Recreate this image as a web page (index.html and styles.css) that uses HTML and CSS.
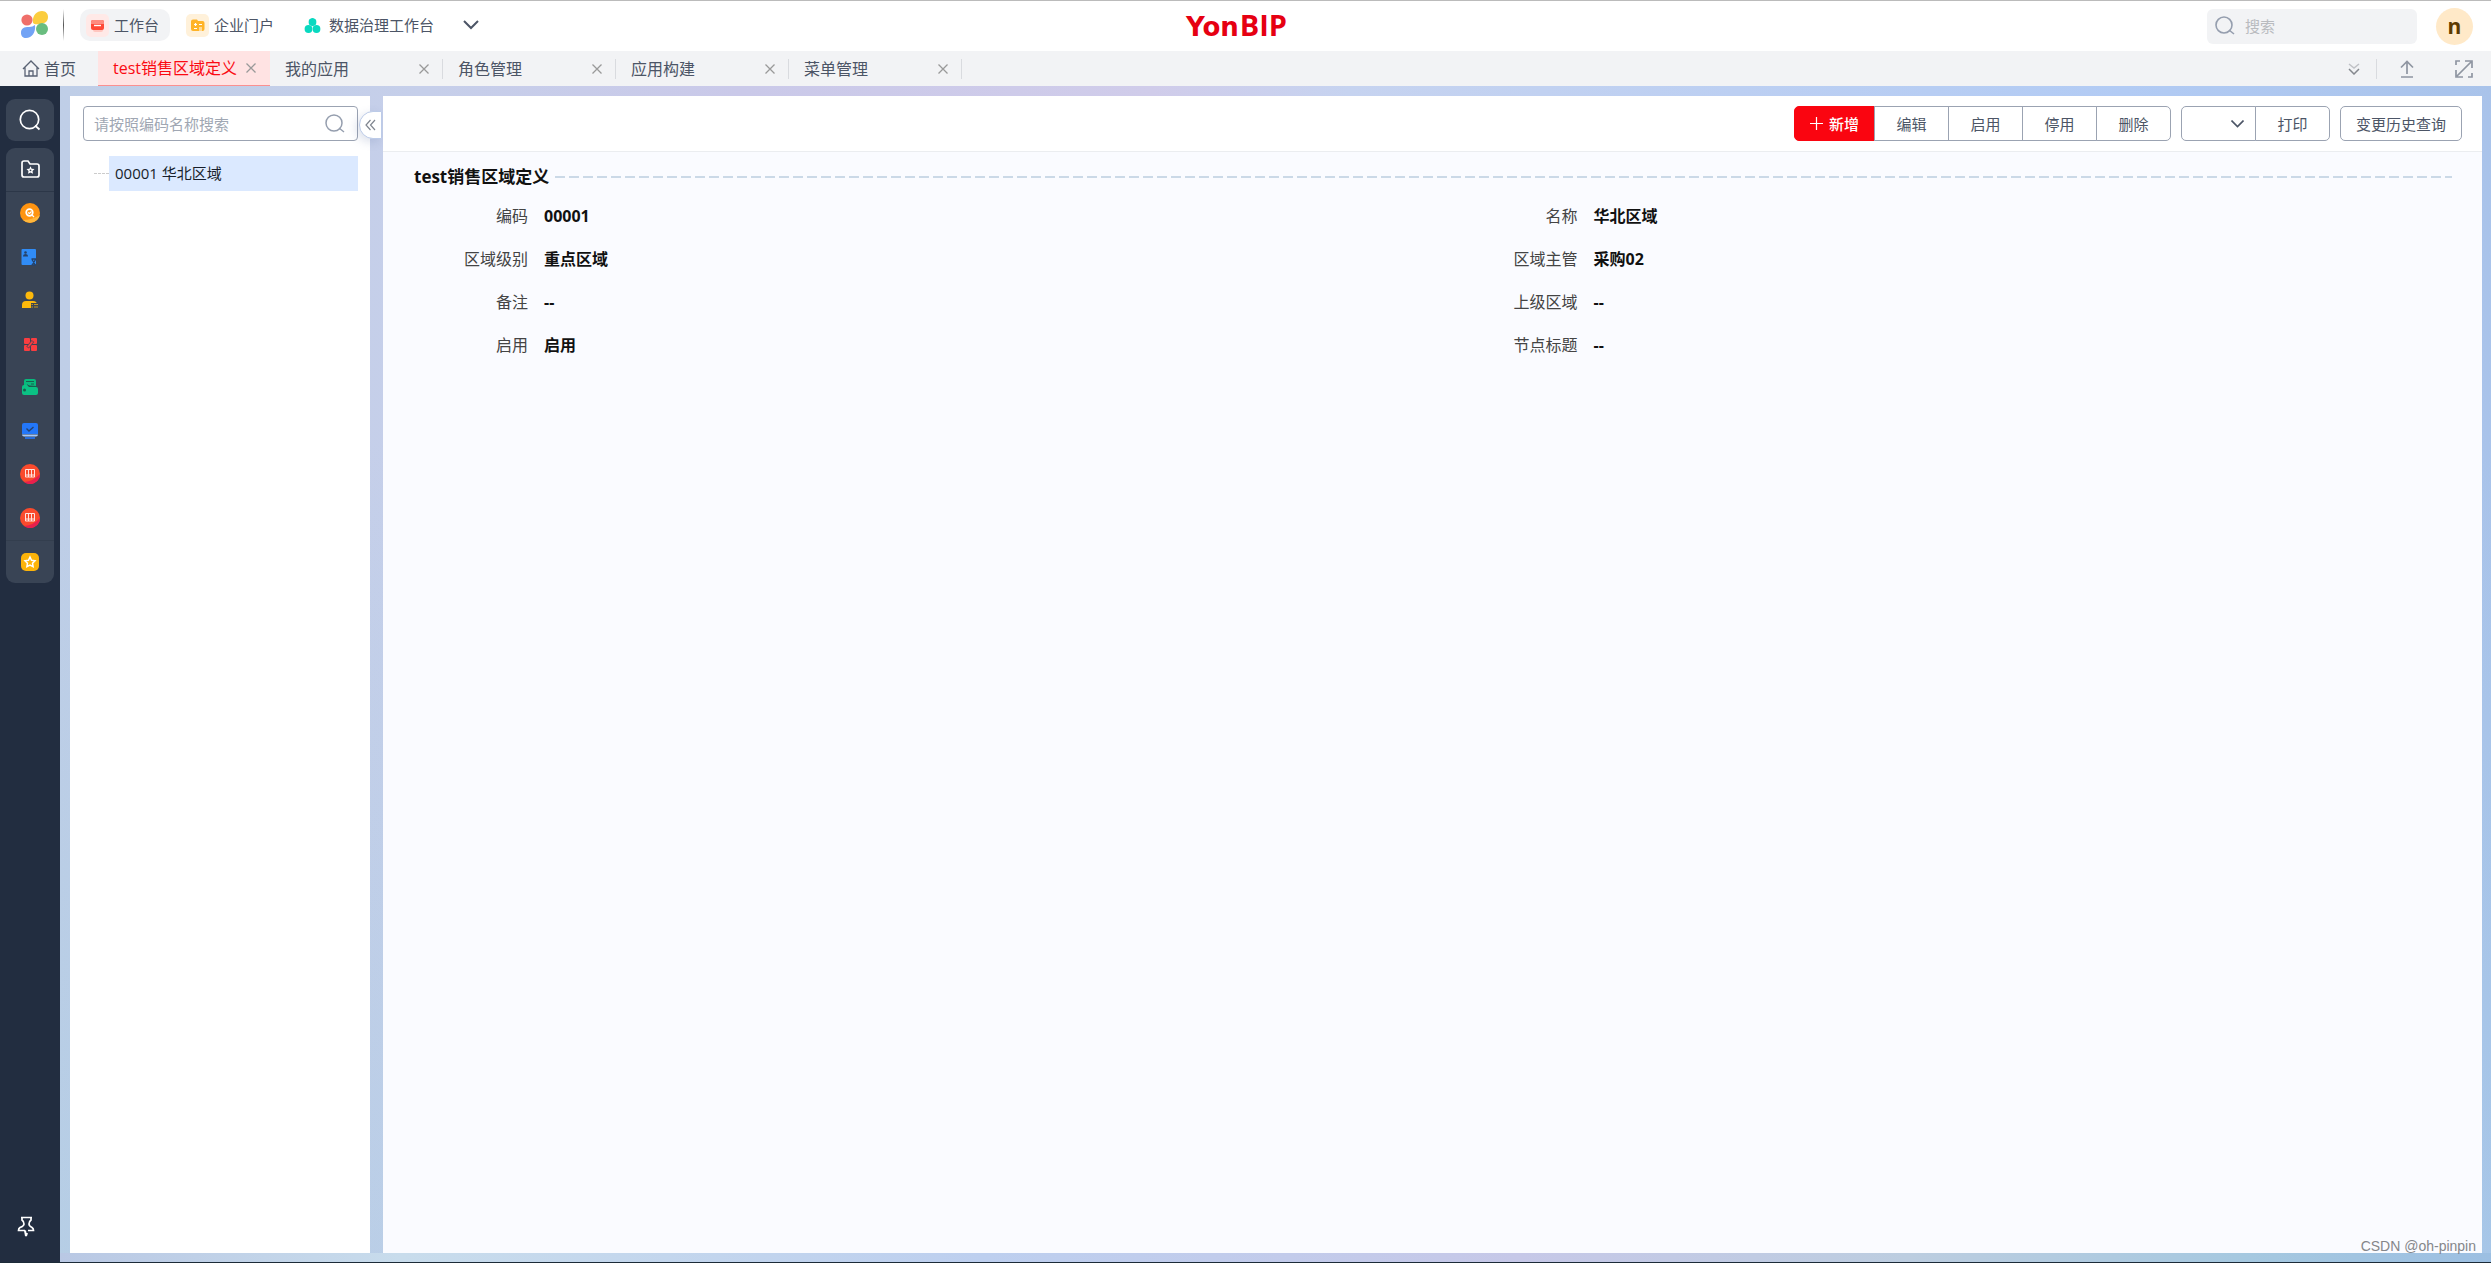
FILE: index.html
```html
<!DOCTYPE html>
<html lang="zh-CN">
<head>
<meta charset="utf-8">
<title>test销售区域定义 - YonBIP</title>
<link rel="stylesheet" href="styles.css">
</head>
<body>
<header class="topbar">
  <div class="topbar-left">
    <svg class="brand-mark" viewBox="0 0 28 28" aria-hidden="true">
      <circle cx="6" cy="9" r="5.6" fill="#ef6f6a"/>
      <path d="M12 12C11 4 16 0 21 0c4 0 6 3 6 6 0 5-4 7-9 7-2 0-4 1-6-1z" fill="#fbcd3f"/>
      <path d="M14 14c1 7-3 13-9 13-3 0-5-2-5-5 0-5 3-6 8-6 3 0 4-1 6-2z" fill="#72a3f5"/>
      <circle cx="21" cy="18" r="6" fill="#69bd7f"/>
    </svg>
    <span class="brand-divider"></span>
    <nav class="spaces" aria-label="工作空间">
      <a class="space space-active" href="#">
        <svg class="space-icon" viewBox="0 0 23 23" aria-hidden="true"><rect width="23" height="23" rx="5" fill="#ffe9e7"/><rect x="7" y="8" width="10" height="10" rx="2" fill="#ffc6bf"/><rect x="5" y="6" width="13" height="10" rx="2" fill="#ff4936"/><path d="M5 8q0-2 2-2h9q2 0 2 2v2H5z" fill="#ff8b7f"/><path d="M8 11.5h7" stroke="#fff" stroke-width="1.4"/></svg>
        <span>工作台</span>
      </a>
      <a class="space" href="#">
        <svg class="space-icon" viewBox="0 0 23 23" aria-hidden="true"><rect width="23" height="23" rx="5" fill="#fff1da"/><path d="M5 7.500q0-2 2-2h4l1 1.500h4.500q2 0 2 2V15q0 2-2 2H7q-2 0-2-2z" fill="#ffb428"/><path d="M8 10.500h3M9.500 9v3M8 14.500h3M13 10.500h3M13 14h3M13 16h3" stroke="#fff" stroke-width="1.200"/></svg>
        <span>企业门户</span>
      </a>
      <a class="space" href="#">
        <svg class="space-icon" viewBox="0 0 23 23" aria-hidden="true"><g fill="#08d9c0"><path d="M11.500 4l3.600 2v4.200l-3.600 2-3.600-2V6z"/><circle cx="11.500" cy="8" r="3.800"/><circle cx="7.500" cy="15" r="3.900"/><circle cx="15.500" cy="15" r="3.900"/></g></svg>
        <span>数据治理工作台</span>
      </a>
      <button class="icon-button" type="button" aria-label="更多">
        <svg width="16" height="10" viewBox="0 0 16 10" fill="none" stroke="#4c5566" stroke-width="2"><path d="M1 1l7 7 7-7"/></svg>
      </button>
    </nav>
  </div>
  <strong class="product"><span class="product-yon">Yon</span><span class="product-bip">BIP</span></strong>
  <div class="account">
    <label class="global-search">
      <svg width="20" height="20" viewBox="0 0 20 20" fill="none" stroke="#959eae" stroke-width="1.600"><circle cx="9" cy="9" r="8"/><path d="M14 14l5 4"/></svg>
      <input type="search" placeholder="搜索" aria-label="搜索">
    </label>
    <button class="avatar" type="button">n</button>
  </div>
</header>

<div class="tabbar">
  <a class="home" href="#">
    <svg width="18" height="17" viewBox="0 0 18 17" fill="none" stroke="#596273" stroke-width="1.300"><path d="M1 9l8-8 8 8M3 7.500V16h12V7.500M7 16v-5h4v5"/></svg>
    <span>首页</span>
  </a>
  <div class="tab tab-active"><a href="#">test销售区域定义</a><button class="close" type="button" aria-label="关闭"><svg width="10" height="10" viewBox="0 0 10 10"><path d="M.5.5l9 9M9.500.5l-9 9"/></svg></button></div>
  <div class="tab"><a href="#">我的应用</a><button class="close" type="button" aria-label="关闭"><svg width="10" height="10" viewBox="0 0 10 10"><path d="M.5.5l9 9M9.500.5l-9 9"/></svg></button></div>
  <div class="tab"><a href="#">角色管理</a><button class="close" type="button" aria-label="关闭"><svg width="10" height="10" viewBox="0 0 10 10"><path d="M.5.5l9 9M9.500.5l-9 9"/></svg></button></div>
  <div class="tab"><a href="#">应用构建</a><button class="close" type="button" aria-label="关闭"><svg width="10" height="10" viewBox="0 0 10 10"><path d="M.5.5l9 9M9.500.5l-9 9"/></svg></button></div>
  <div class="tab"><a href="#">菜单管理</a><button class="close" type="button" aria-label="关闭"><svg width="10" height="10" viewBox="0 0 10 10"><path d="M.5.5l9 9M9.500.5l-9 9"/></svg></button></div>
  <div class="tab-tools">
    <button class="icon-button" type="button" aria-label="全部页签"><svg width="12" height="12" viewBox="0 0 12 12" fill="none" stroke-width="1.500"><path d="M1 1l5 4 5-4" stroke="#c0c2c6"/><path d="M1 6l5 5 5-5" stroke="#85888e"/></svg></button>
    <span class="tool-divider"></span>
    <button class="icon-button" type="button" aria-label="收起"><svg width="14" height="18" viewBox="0 0 14 18" fill="none" stroke="#8f95a1" stroke-width="1.700"><path d="M1 17h12M7 14V2M1 7.500l6-6 6 6"/></svg></button>
    <button class="icon-button tool-last" type="button" aria-label="全屏"><svg width="18" height="18" viewBox="0 0 18 18" fill="none" stroke="#8f95a1" stroke-width="1.700"><path d="M1 5V1h4M13 17h4v-4M2 16L16 2M10 1h7v7M8 17H1v-7"/></svg></button>
  </div>
</div>

<div class="workspace">
  <nav class="rail" aria-label="应用">
    <button class="rail-search" type="button" aria-label="搜索"><svg width="22" height="22" viewBox="0 0 22 22" fill="none" stroke="#fff" stroke-width="1.700"><circle cx="10.500" cy="10.500" r="9.200"/><path d="M16 16.500l4.500 4"/></svg></button>
    <div class="rail-group">
      <a class="rail-item rail-first" href="#" aria-label="收藏"><svg width="20" height="20" viewBox="0 0 20 20" fill="none" stroke="#fff" stroke-width="1.700"><path d="M2 4q0-2 2-2h4l2 3h7q2 0 2 2v9q0 2-2 2H4q-2 0-2-2z"/><path d="M10.500 7.200l1.200 2.500 2.800.4-2 2 .5 2.700-2.500-1.300L8 14.800l.5-2.700-2-2 2.800-.4z" fill="#fff" stroke="none"/><circle cx="10.500" cy="11.300" r=".9" fill="#394455" stroke="none"/></svg></a>
      <a class="rail-item" href="#" aria-label="查询"><svg width="20" height="20" viewBox="0 0 20 20"><circle cx="10" cy="10" r="10" fill="#ff9411"/><path d="M3 17a10 10 0 0 0 14 0q2-2 3-5Q12 17 3 17z" fill="#ffb73c"/><circle cx="9.500" cy="9.500" r="3.300" fill="none" stroke="#fff" stroke-width="1.700"/><path d="M12 12l2 2M8 9.500l1.500 1 2-2" fill="none" stroke="#fff" stroke-width="1.200"/></svg></a>
      <a class="rail-item" href="#" aria-label="档案"><svg width="20" height="20" viewBox="0 0 20 20"><rect x="1.500" y="2" width="14.500" height="16" rx="1" fill="#308cf6"/><circle cx="5.500" cy="5.500" r="1.300" fill="#26436b"/><path d="M3 9.500q0-2.500 2.500-2.500T8 9.500z" fill="#26436b"/><path d="M11.500 12h4.500M11.500 18h4.500M12 12.500l3 5M15.500 12.500l-3 5" stroke="#26436b" stroke-width="1.300"/></svg></a>
      <a class="rail-item" href="#" aria-label="人员"><svg width="20" height="20" viewBox="0 0 20 20"><circle cx="9.500" cy="5.500" r="4" fill="#fdb90b"/><path d="M2 18v-3q0-4 4-4h7q4 0 4 4v3z" fill="#fdb90b"/><path d="M11 18v-5h8v5z" fill="#394455"/><path d="M11.500 14.500h1.500M14 14.500h4M11.500 17h1.500M14 17h4" stroke="#c39522" stroke-width="1.200"/></svg></a>
      <a class="rail-item" href="#" aria-label="组件"><svg width="20" height="20" viewBox="0 0 20 20"><g fill="#f93d40"><rect x="4" y="4" width="6" height="6" rx="1"/><rect x="11" y="4" width="6" height="6" rx="1"/><rect x="4" y="11" width="6" height="6" rx="1"/><rect x="11" y="11" width="6" height="6" rx="1"/></g><path d="M7.500 13.500l5.500-6.500" stroke="#6b3f4d" stroke-width="3.400"/><path d="M8 13l4.500-5.500" stroke="#f93d40" stroke-width="1.600"/></svg></a>
      <a class="rail-item" href="#" aria-label="钱包"><svg width="20" height="20" viewBox="0 0 20 20"><path d="M4 8V4q0-2 2-2h8q2 0 2 2v5z" fill="#08b97c"/><path d="M2 10q0-2 2-2h3l2 2h7q2 0 2 2v4q0 2-2 2H4q-2 0-2-2z" fill="#0bc184"/><path d="M6 4.500h8M7.500 7.500l2 2H17M11 7h3" fill="none" stroke="#17604f"/><circle cx="4.500" cy="13" r="1.500" fill="#17604f"/></svg></a>
      <a class="rail-item" href="#" aria-label="桌面"><svg width="20" height="20" viewBox="0 0 20 20"><path d="M2 13V4q0-2 2-2h12q2 0 2 2v9z" fill="#2377f9"/><path d="M2 13.500h16q0 2-2 2H4q-2 0-2-2z" fill="#a5c7f8"/><path d="M5 17h10" stroke="#2377f9" stroke-width="1.600"/><path d="M6.500 7.500l2.500 2.500 4.500-4" fill="none" stroke="#25426e" stroke-width="1.400"/></svg></a>
      <a class="rail-item" href="#" aria-label="应用一"><svg width="20" height="20" viewBox="0 0 20 20"><circle cx="10" cy="10" r="10" fill="#fa4a2c"/><path d="M4 18a10 10 0 0 0 16-8Q14 17 4 18z" fill="#e81f4d"/><path d="M5.500 5.500h9v7.500h-9zM8.500 5.500v7.500M11.500 5.500v7.500M5.500 11h9" fill="none" stroke="#ffe3de" stroke-width="1"/></svg></a>
      <a class="rail-item" href="#" aria-label="应用二"><svg width="20" height="20" viewBox="0 0 20 20"><circle cx="10" cy="10" r="10" fill="#fa4a2c"/><path d="M4 18a10 10 0 0 0 16-8Q14 17 4 18z" fill="#e81f4d"/><path d="M5.500 5.500h9v7.500h-9zM8.500 5.500v7.500M11.500 5.500v7.500M5.500 11h9" fill="none" stroke="#ffe3de" stroke-width="1"/></svg></a>
      <a class="rail-item rail-last" href="#" aria-label="星标"><svg width="20" height="20" viewBox="0 0 20 20"><rect x="1" y="1" width="18" height="18" rx="5" fill="#fdb40a"/><path d="M10 5l1.500 3.200 3.500.5-2.500 2.500.6 3.500L10 13l-3.100 1.700.6-3.500L5 8.700l3.500-.5z" fill="none" stroke="#fff" stroke-width="1.500"/></svg></a>
    </div>
    <button class="rail-pin" type="button" aria-label="固定"><svg width="18" height="22" viewBox="0 0 18 22" fill="none" stroke="#fff" stroke-width="1.700"><path d="M4 1.500h11M5 2v2q2 1.500 2 4 0 2-4 3.500-1.500 1-1.500 3h6.500M14 2v2q-2 1.500-2 4 0 2 3 3.500 1.500 1 1.500 3H11"/><path d="M8 14.500l1 5.500 1-3" stroke-width="2"/></svg></button>
  </nav>

  <main class="content">
    <aside class="tree-panel">
      <label class="tree-search">
        <input type="search" placeholder="请按照编码名称搜索" aria-label="请按照编码名称搜索">
        <svg width="20" height="20" viewBox="0 0 20 20" fill="none" stroke="#959eae" stroke-width="1.500"><circle cx="9" cy="9" r="8"/><path d="M14 14l5 4"/></svg>
      </label>
      <ul class="tree">
        <li><span class="tree-line"></span><a class="tree-node" href="#">00001 华北区域</a></li>
      </ul>
      <button class="collapse" type="button" aria-label="收起"><svg width="11" height="12" viewBox="0 0 11 12" fill="none" stroke="#7f858f" stroke-width="1.200"><path d="M5.500 1l-4.500 5 4.500 5M10 1L5.500 6l4.500 5"/></svg></button>
    </aside>

    <section class="detail">
      <div class="toolbar">
        <div class="button-group">
          <button class="button button-primary" type="button"><svg width="13" height="13" viewBox="0 0 13 13" stroke="#fff" stroke-width="1.200"><path d="M6.500 0v13M0 6.500h13"/></svg>新增</button>
          <button class="button" type="button">编辑</button>
          <button class="button" type="button">启用</button>
          <button class="button" type="button">停用</button>
          <button class="button" type="button">删除</button>
        </div>
        <div class="button-group">
          <button class="button button-menu" type="button" aria-label="打印模板"><svg width="13" height="8" viewBox="0 0 13 8" fill="none" stroke="#4c5566" stroke-width="1.600"><path d="M.5.5l6 6 6-6"/></svg></button>
          <button class="button" type="button">打印</button>
        </div>
        <div class="button-group"><button class="button button-wide" type="button">变更历史查询</button></div>
      </div>
      <div class="section-title"><h1>test销售区域定义</h1><span class="section-rule"></span></div>
      <dl class="fields">
        <div class="field"><dt>编码</dt><dd>00001</dd></div>
        <div class="field"><dt>名称</dt><dd>华北区域</dd></div>
        <div class="field"><dt>区域级别</dt><dd>重点区域</dd></div>
        <div class="field"><dt>区域主管</dt><dd>采购02</dd></div>
        <div class="field"><dt>备注</dt><dd>--</dd></div>
        <div class="field"><dt>上级区域</dt><dd>--</dd></div>
        <div class="field"><dt>启用</dt><dd>启用</dd></div>
        <div class="field"><dt>节点标题</dt><dd>--</dd></div>
      </dl>
      <span class="watermark">CSDN @oh-pinpin</span>
    </section>
  </main>
</div>
</body>
</html>
```
FILE: styles.css
```css
* {
  box-sizing: border-box;
}

body {
  margin: 0;
  min-height: 100vh;
  display: flex;
  flex-direction: column;
  border-top: 1px solid #bbb;
  border-bottom: 1px solid #1c2b38;
  background: #fff;
  color: #4c5566;
  font: 15px/20px "Open Sans", "Noto Sans CJK SC", sans-serif;
}

a {
  color: inherit;
  text-decoration: none;
}

button,
input {
  font: inherit;
  color: inherit;
  margin: 0;
  padding: 0;
  border: 0;
  background: none;
}

input {
  outline: 0;
  min-width: 0;
}

svg {
  display: block;
  flex: none;
}

.topbar {
  display: grid;
  grid-template-columns: 1fr auto 1fr;
  align-items: center;
  height: 50px;
  padding: 0 18px 0 0;
}

.topbar-left {
  display: flex;
  align-items: center;
  padding: 0 0 2px 21px;
}

.brand-mark {
  width: 28px;
  height: 28px;
}

.brand-divider {
  width: 1px;
  height: 32px;
  margin: 0 16px 0 14px;
  background: linear-gradient(#fff, #555, #fff);
}

.spaces {
  display: flex;
  align-items: center;
  gap: 10px;
}

.space {
  display: flex;
  align-items: center;
  gap: 5px;
  height: 32px;
  padding: 0 11px 0 6px;
  border-radius: 10px;
  white-space: nowrap;
}

.space-active {
  background: #f2f3f5;
}

.space-icon {
  width: 23px;
  height: 23px;
}

.icon-button {
  display: flex;
}

.spaces .icon-button {
  margin-left: 8px;
}

.product {
  display: flex;
  align-items: baseline;
  gap: 1px;
  color: #e60012;
  line-height: 32px;
}

.product-yon {
  font-family: "DejaVu Sans", sans-serif;
  font-size: 26px;
}

.product-bip {
  font-size: 29px;
}

.account {
  display: flex;
  align-items: center;
  justify-content: flex-end;
  gap: 19px;
}

.global-search {
  display: flex;
  align-items: center;
  gap: 10px;
  width: 210px;
  height: 35px;
  padding: 0 8px;
  border-radius: 6px;
  background: #f2f3f5;
}

.global-search input {
  flex: 1;
}

.global-search input::placeholder {
  color: #b9bbbf;
}

.avatar {
  width: 37px;
  height: 37px;
  border-radius: 50%;
  background: #ffe9c8;
  color: #5c3a00;
  font-size: 21px;
  font-weight: 700;
}

.tabbar {
  display: flex;
  height: 35px;
  background: #f2f3f5;
  font-size: 16px;
}

.home {
  display: flex;
  align-items: center;
  gap: 4px;
  width: 98px;
  padding-left: 22px;
}

.tab {
  position: relative;
  display: flex;
  align-items: center;
  justify-content: space-between;
  width: 173px;
  padding: 0 14px 0 15px;
  white-space: nowrap;
}

.tab:not(.tab-active)::after {
  content: "";
  position: absolute;
  right: 0;
  top: 8px;
  height: 20px;
  border-right: 1px solid #d9dbdf;
}

.tab-active {
  width: 172px;
  background: #ffe3e3;
  color: #fa0a12;
  border-bottom: 1px solid #fb9090;
}

.close svg {
  fill: none;
  stroke: #999;
  stroke-width: 1.3;
}

.tab-tools {
  display: flex;
  align-items: center;
  margin-left: auto;
  padding-right: 18px;
}

.tool-divider {
  width: 1px;
  height: 20px;
  margin: 0 23px 0 16px;
  background: #d9dbdf;
}

.tool-last {
  margin-left: 41px;
}

.workspace {
  flex: 1;
  display: flex;
}

.rail {
  display: flex;
  flex-direction: column;
  align-items: center;
  width: 60px;
  padding: 13px 6px 24px;
  background: #222d40;
}

.rail-search {
  display: flex;
  align-items: center;
  justify-content: center;
  width: 48px;
  height: 42px;
  border-radius: 9px;
  background: #394455;
}

.rail-group {
  display: grid;
  grid-auto-rows: 1fr;
  width: 48px;
  height: 435px;
  margin-top: 7px;
  border-radius: 9px;
  background: #394455;
}

.rail-item {
  display: flex;
  align-items: center;
  justify-content: center;
}

.rail-first {
  border-bottom: 1px solid #2c3748;
}

.rail-last {
  border-top: 1px solid #333e4e;
}

.rail-pin {
  margin: auto 8px 0 0;
}

.content {
  flex: 1;
  display: flex;
  gap: 13px;
  padding: 10px 9px 9px 10px;
  background:
    linear-gradient(to right, #b9c8e4, #c8dcec 14%, #bdcfef 38%, #c6c8e8 60%, #bccde0 76%, #a5c8e0 90%, #9cbfe2) bottom / 100% 9px no-repeat,
    linear-gradient(to bottom, transparent 30%, rgba(160, 205, 225, 0.3)),
    linear-gradient(to right, #bfcee7, #c6cfea 15%, #cac9e9 28%, #d0ccea 45%, #c6d3f0 53%, #b2cbf4 85%, #a9c3ea);
}

.tree-panel {
  position: relative;
  width: 300px;
  padding: 10px 12px 0 13px;
  background: #fff;
}

.tree-search {
  display: flex;
  align-items: center;
  height: 35px;
  padding: 0 12px 0 10px;
  border: 1px solid #9ba3b2;
  border-radius: 4px;
}

.tree-search input {
  flex: 1;
}

.tree-search input::placeholder {
  color: #a0a7b3;
}

.tree {
  margin: 15px 0 0;
  padding: 0 0 0 11px;
  list-style: none;
}

.tree li {
  display: flex;
  align-items: center;
}

.tree-line {
  width: 15px;
  border-top: 1px dashed #ccc;
}

.tree-node {
  flex: 1;
  padding: 0 6px;
  background: #dbe9ff;
  color: #171e2b;
  line-height: 35px;
}

.collapse {
  position: absolute;
  right: -12px;
  top: 15px;
  display: flex;
  align-items: center;
  justify-content: center;
  width: 23px;
  height: 28px;
  border: 1px solid #bccbe8;
  border-radius: 14px 0 0 14px;
  background: #fff;
  box-shadow: -3px 3px 10px rgba(90, 110, 160, 0.2);
}

.detail {
  position: relative;
  flex: 1;
  background: #fafbff;
}

.toolbar {
  display: flex;
  justify-content: flex-end;
  gap: 10px;
  padding: 10px 20px;
  border-bottom: 1px solid #ebedf0;
  background: #fff;
}

.button-group {
  display: flex;
}

.button {
  display: flex;
  align-items: center;
  justify-content: center;
  width: 75px;
  height: 35px;
  margin-left: -1px;
  border: 1px solid #9ba3b2;
  background: #fff;
}

.button:first-child {
  margin-left: 0;
  border-radius: 5px 0 0 5px;
}

.button:last-child {
  border-radius: 0 5px 5px 0;
}

.button:only-child {
  border-radius: 5px;
}

.button-primary {
  gap: 6px;
  width: 81px;
  border-color: #fa0510;
  background: #fa0510;
  color: #fff;
  font-weight: 500;
}

.button-menu {
  justify-content: flex-end;
  padding-right: 11px;
}

.button-wide {
  width: 122px;
}

.section-title {
  display: flex;
  align-items: center;
  gap: 6px;
  padding: 13px 30px 0 31px;
}

.section-title h1 {
  margin: 0;
  color: #111;
  font-size: 17px;
  line-height: 24px;
}

.section-rule {
  flex: 1;
  height: 2px;
  background: repeating-linear-gradient(to right, #cbd9e7 0 10px, transparent 10px 14px);
}

.fields {
  display: grid;
  grid-template-columns: 1fr 1fr;
  row-gap: 19px;
  margin: 15px 0 0;
  font-size: 16px;
  line-height: 24px;
}

.field {
  display: flex;
  gap: 16px;
}

.field dt {
  width: 145px;
  color: #444;
  text-align: right;
}

.field dd {
  margin: 0;
  color: #111;
  font-weight: 700;
}

.watermark {
  position: absolute;
  right: 6px;
  bottom: 0;
  color: #85868a;
  font-family: "Liberation Sans", sans-serif;
  font-size: 14px;
  line-height: 14px;
}
```
